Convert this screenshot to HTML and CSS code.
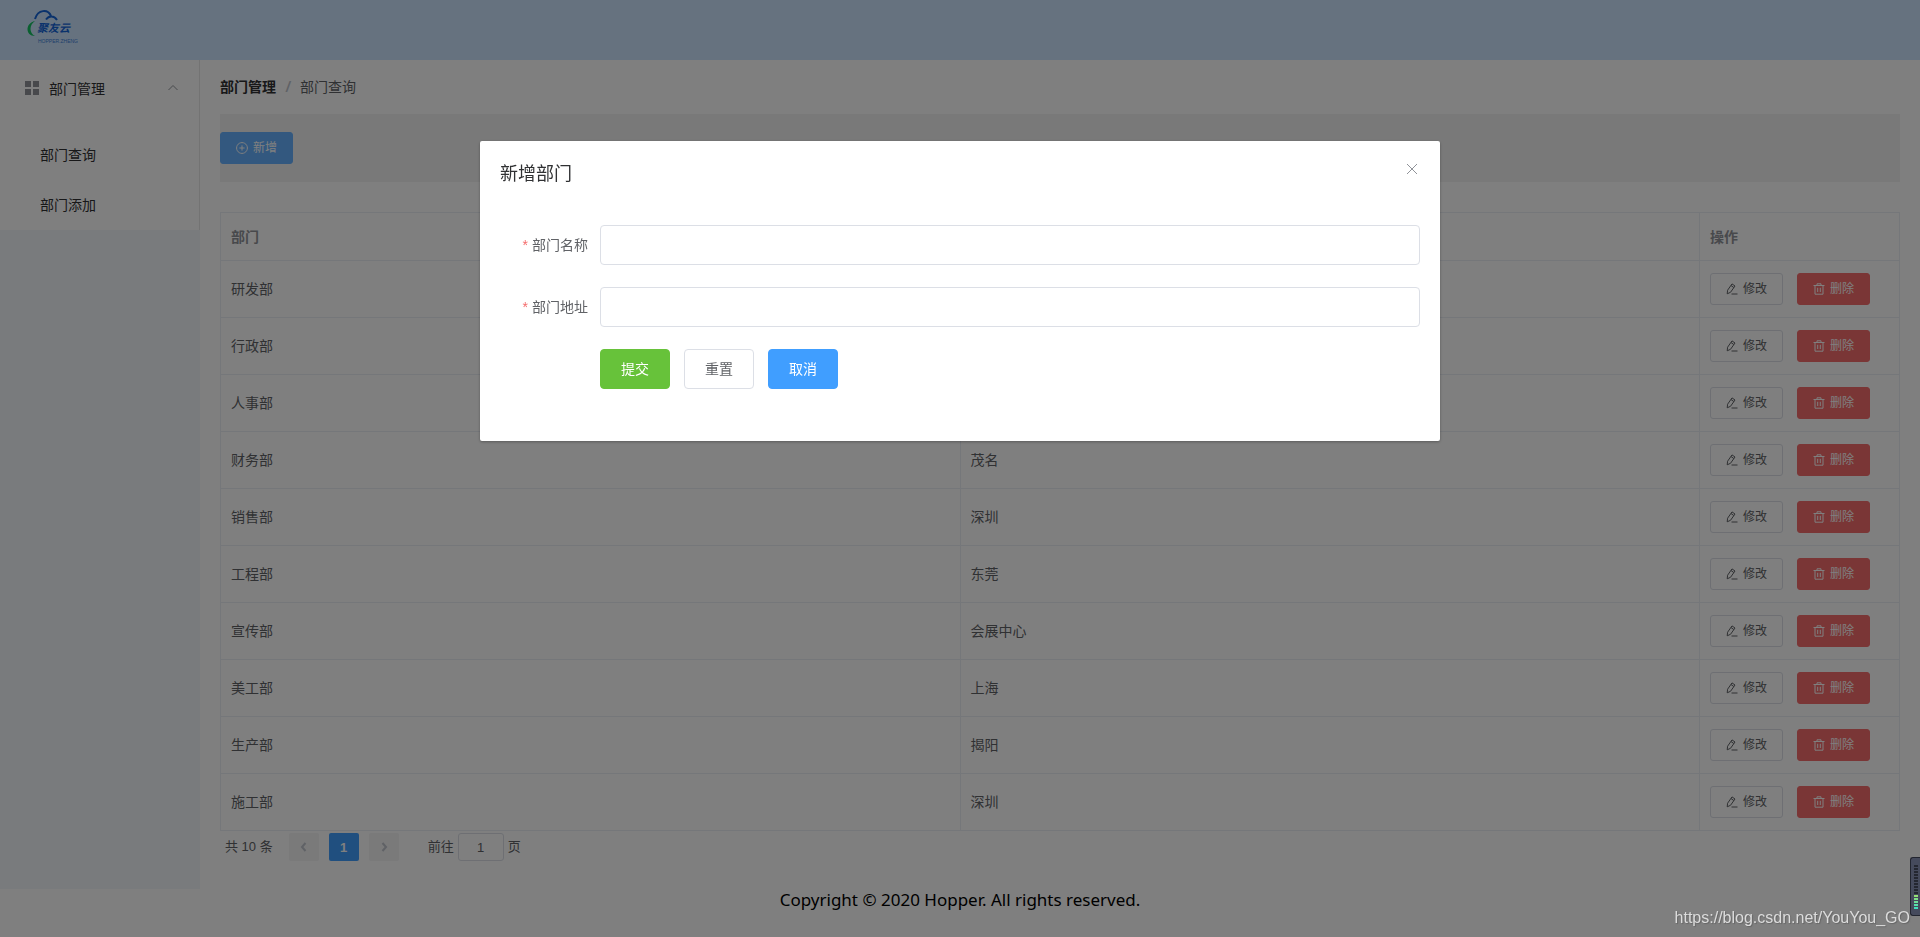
FILE: index.html
```
<!DOCTYPE html>
<html lang="zh-CN">

<head>
    <meta charset="UTF-8">
    <title>部门管理</title>
    <link rel="stylesheet" href="styles.css">
</head>

<body>
    <svg class="sprite" aria-hidden="true">
        <symbol id="icon-edit" viewBox="0 0 12 12">
            <path d="M1.2 10.8 L1.6 7.2 L6 0.9 L9 3 L4.5 9.3 Z M5 2.5 L7.9 4.6 M5.5 11 H11.5" />
        </symbol>
        <symbol id="icon-delete" viewBox="0 0 12 12">
            <path d="M0.5 2.5 H11.5 M4 2.5 V0.8 H8 V2.5 M2 2.5 V11.2 H10 V2.5 M4.7 4.8 V9 M7.3 4.8 V9" />
        </symbol>
        <symbol id="icon-plus" viewBox="0 0 12 12">
            <path d="M6 0.6 A5.4 5.4 0 1 1 5.99 0.6 Z M3.4 6 H8.6 M6 3.4 V8.6" />
        </symbol>
    </svg>

    <div class="container">
        <header class="header">
            <svg class="logo" viewBox="0 0 52 38" role="img" aria-label="聚友云">
                <path class="logo-cloud" d="M9 11 C12 1 22 1 25 8 M20 11.5 C23 7.5 28 7.5 31 12" />
                <path class="logo-leaf" d="M9 13 C-1 15 -1 28 9 28 C3 25 3 17 9 13 Z" />
                <text class="logo-name" x="11" y="24">聚友云</text>
                <text class="logo-sub" x="12" y="35">HOPPER.ZHENG</text>
            </svg>
        </header>

        <div class="body">
            <aside class="aside">
                <nav class="menu">
                    <button class="menu-title" type="button" aria-expanded="true">
                        <svg class="icon-menu" viewBox="0 0 14 14">
                            <path d="M0 0h6v6H0z M8 0h6v6H8z M0 8h6v6H0z M8 8h6v6H8z" />
                        </svg>
                        <span>部门管理</span>
                        <svg class="icon-arrow" viewBox="0 0 12 12">
                            <path d="M1.5 8 L6 3.5 L10.5 8" />
                        </svg>
                    </button>
                    <div class="menu-group">
                        <a class="menu-item" href="#">部门查询</a>
                        <a class="menu-item" href="#">部门添加</a>
                    </div>
                </nav>
            </aside>

            <main class="main">
                <div class="breadcrumb">
                    <a href="#">部门管理</a>
                    <i>/</i>
                    <span>部门查询</span>
                </div>

                <div class="toolbar">
                    <button class="btn small primary" type="button"><svg class="icon"><use href="#icon-plus" /></svg>新增</button>
                </div>

                <table class="table">
                    <thead>
                        <tr>
                            <th>部门</th>
                            <th>地址</th>
                            <th class="operate">操作</th>
                        </tr>
                    </thead>
                    <tbody id="rows"></tbody>
                </table>

                <div class="pagination">
                    <span class="total">共 10 条</span>
                    <button class="page" type="button" aria-label="上一页" disabled>
                        <svg viewBox="0 0 12 12"><path d="M7.5 2 L4 6 L7.5 10" /></svg>
                    </button>
                    <button class="page active" type="button">1</button>
                    <button class="page" type="button" aria-label="下一页" disabled>
                        <svg viewBox="0 0 12 12"><path d="M4.5 2 L8 6 L4.5 10" /></svg>
                    </button>
                    <label class="jump" for="jump">前往</label>
                    <input class="jump-input" id="jump" type="text" value="1">
                    <span>页</span>
                </div>
            </main>
        </div>

        <footer class="footer">Copyright © 2020 Hopper. All rights reserved.</footer>
    </div>

    <div class="mask">
        <div class="dialog" role="dialog" aria-labelledby="dialog-title">
            <div class="dialog-header">
                <span class="dialog-title" id="dialog-title">新增部门</span>
                <button class="dialog-close" type="button" aria-label="关闭">
                    <svg viewBox="0 0 12 12"><path d="M1 1 L11 11 M11 1 L1 11" /></svg>
                </button>
            </div>
            <form class="form">
                <div class="form-item">
                    <label for="dept-name">部门名称</label>
                    <input id="dept-name" type="text">
                </div>
                <div class="form-item">
                    <label for="dept-address">部门地址</label>
                    <input id="dept-address" type="text">
                </div>
                <div class="form-buttons">
                    <button class="btn success" type="button">提交</button>
                    <button class="btn" type="reset">重置</button>
                    <button class="btn primary" type="button">取消</button>
                </div>
            </form>
        </div>
    </div>

    <div class="meter"><div class="meter-off"></div><div class="meter-on"></div></div>
    <div class="watermark">https://blog.csdn.net/YouYou_GO</div>

    <script src="script.js"></script>
</body>

</html>
```
FILE: styles.css
```
* {
    box-sizing: border-box;
}

body {
    margin: 0;
    background-color: #fff;
    color: #606266;
    font-family: "Liberation Sans", "Noto Sans CJK SC", sans-serif;
    font-size: 14px;
}

button,
input {
    font-family: inherit;
    font-size: 14px;
    color: #606266;
}

.sprite {
    display: none;
}

svg {
    fill: none;
    stroke: currentColor;
}

.container {
    display: flex;
    flex-direction: column;
    min-height: 100vh;
}

/* header */
.header {
    height: 60px;
    padding: 8px 26px;
    background-color: #cce5ff;
}

.logo {
    display: block;
    width: 52px;
    height: 38px;
}

.logo-cloud {
    stroke: #1565d8;
    stroke-width: 2;
}

.logo-leaf {
    fill: #14c060;
    stroke: none;
}

.logo-name {
    fill: #1565d8;
    stroke: none;
    font-size: 11px;
    font-weight: bold;
    font-style: italic;
}

.logo-sub {
    fill: #3f7fd8;
    stroke: none;
    font-size: 5px;
}

/* sidebar */
.body {
    display: flex;
    flex: 1;
}

.aside {
    width: 200px;
    background-color: #f3f7fb;
}

.menu {
    background-color: #fff;
    border-right: 1px solid #e6e6e6;
}

.menu-title {
    display: flex;
    align-items: center;
    width: 100%;
    height: 56px;
    padding: 0 20px 0 25px;
    border: 0;
    background: none;
    color: #303133;
}

.icon-menu {
    width: 14px;
    height: 14px;
    margin-right: 10px;
    fill: #909399;
    stroke: none;
}

.icon-arrow {
    width: 12px;
    height: 12px;
    margin-left: auto;
    color: #909399;
}

.menu-group {
    padding-top: 14px;
}

.menu-item {
    display: block;
    padding-left: 40px;
    line-height: 50px;
    color: #303133;
    text-decoration: none;
}

/* main */
.main {
    flex: 1;
    padding: 20px 20px 26px;
}

.breadcrumb {
    display: flex;
    height: 34px;
    line-height: 14px;
}

.breadcrumb a {
    color: #303133;
    font-weight: bold;
    text-decoration: none;
}

.breadcrumb i {
    margin: 0 10px;
    color: #c0c4cc;
    font-weight: bold;
}

.toolbar {
    height: 68px;
    margin-bottom: 30px;
    padding-top: 18px;
    background-color: #f2f2f2;
}

.btn {
    height: 40px;
    padding: 0 20px;
    border: 1px solid #dcdfe6;
    border-radius: 4px;
    background-color: #fff;
    line-height: 14px;
}

.small {
    display: inline-flex;
    align-items: center;
    height: 32px;
    padding: 0 15px;
    border-radius: 3px;
    font-size: 12px;
}

.primary {
    border-color: #409eff;
    background-color: #409eff;
    color: #fff;
}

.toolbar .primary {
    border-color: #66b1ff;
    background-color: #66b1ff;
}

.success {
    border-color: #67c23a;
    background-color: #67c23a;
    color: #fff;
}

.danger {
    border-color: #f56c6c;
    background-color: #f56c6c;
    color: #fff;
}

.icon {
    width: 12px;
    height: 12px;
    margin-right: 5px;
}

.table {
    width: 100%;
    border: 1px solid #ebeef5;
    border-collapse: collapse;
    table-layout: fixed;
    line-height: 22px;
}

.table th,
.table td {
    height: 57px;
    padding: 0 10px;
    border: 1px solid #ebeef5;
    text-align: left;
}

.table th {
    height: 48px;
    color: #909399;
    font-weight: bold;
}

.table .operate {
    width: 200px;
}

.actions {
    display: flex;
    gap: 14px;
}

.pagination {
    display: flex;
    align-items: center;
    padding: 2px 5px;
    font-size: 13px;
    line-height: 28px;
}

.total {
    margin-right: 16px;
}

.page {
    width: 30px;
    height: 28px;
    margin-right: 10px;
    padding: 0;
    border: 0;
    border-radius: 2px;
    background-color: #f4f4f5;
    color: #c0c4cc;
    font-size: 13px;
    font-weight: bold;
}

.page svg {
    display: block;
    width: 12px;
    height: 12px;
    margin: auto;
    stroke-width: 2;
}

.page.active {
    background-color: #409eff;
    color: #fff;
}

.jump {
    margin-left: 19px;
}

.jump-input {
    width: 46px;
    height: 28px;
    margin: 0 4px;
    border: 1px solid #dcdfe6;
    border-radius: 3px;
    background-color: #fff;
    font-size: 13px;
    text-align: center;
}

.footer {
    height: 49px;
    color: #000;
    font-family: "Noto Sans", "Open Sans", sans-serif;
    font-size: 17px;
    line-height: 22px;
    text-align: center;
}

/* dialog */
.mask {
    position: fixed;
    inset: 0;
    background-color: rgba(0, 0, 0, 0.5);
}

.dialog {
    width: 50%;
    margin: 15vh auto 0;
    border-radius: 2px;
    background-color: #fff;
    box-shadow: 0 1px 3px rgba(0, 0, 0, 0.3);
}

.dialog-header {
    display: flex;
    justify-content: space-between;
    padding: 20px 20px 8px;
}

.dialog-title {
    color: #303133;
    font-size: 18px;
    line-height: 26px;
}

.dialog-close {
    width: 16px;
    height: 16px;
    padding: 0;
    border: 0;
    background: none;
    color: #909399;
}

.dialog-close svg {
    display: block;
    width: 12px;
    height: 12px;
    margin: auto;
}

.form {
    padding: 30px 20px 52px;
}

.form-item {
    display: flex;
    margin-bottom: 22px;
}

.form-item label {
    width: 100px;
    padding-right: 12px;
    line-height: 40px;
    text-align: right;
}

.form-item label::before {
    content: "*";
    margin-right: 4px;
    color: #f56c6c;
}

.form-item input {
    flex: 1;
    height: 40px;
    padding: 0 15px;
    border: 1px solid #dcdfe6;
    border-radius: 4px;
}

.form-buttons {
    display: flex;
    gap: 14px;
    padding-left: 100px;
}

/* floating level meter and watermark */
.meter {
    position: fixed;
    right: 0;
    bottom: 21px;
    width: 10px;
    height: 59px;
    padding: 7px 2px 6px 3px;
    border: 1px solid #22252f;
    border-right: 0;
    border-radius: 3px 0 0 3px;
    background-color: #454a5c;
}

.meter-off {
    height: 30px;
    background: repeating-linear-gradient(#242731 0 2px, transparent 2px 3px);
}

.meter-on {
    height: 15px;
    background: repeating-linear-gradient(transparent 0 2px, #454a5c 2px 3px), linear-gradient(#9be070, #35e0c8);
}

.watermark {
    position: fixed;
    right: 10px;
    bottom: 9px;
    color: #dcdcdc;
    font-size: 16px;
    line-height: 20px;
    text-shadow: 1px 1px 1px #666;
}
```
FILE: script.js
```
const departments = [
    ["研发部", "深圳"],
    ["行政部", "广州"],
    ["人事部", "深圳"],
    ["财务部", "茂名"],
    ["销售部", "深圳"],
    ["工程部", "东莞"],
    ["宣传部", "会展中心"],
    ["美工部", "上海"],
    ["生产部", "揭阳"],
    ["施工部", "深圳"]
];

document.getElementById("rows").innerHTML = departments.map(([name, address]) => `
    <tr>
        <td>${name}</td>
        <td>${address}</td>
        <td>
            <div class="actions">
                <button class="btn small" type="button"><svg class="icon"><use href="#icon-edit" /></svg>修改</button>
                <button class="btn small danger" type="button"><svg class="icon"><use href="#icon-delete" /></svg>删除</button>
            </div>
        </td>
    </tr>`).join("");
```
